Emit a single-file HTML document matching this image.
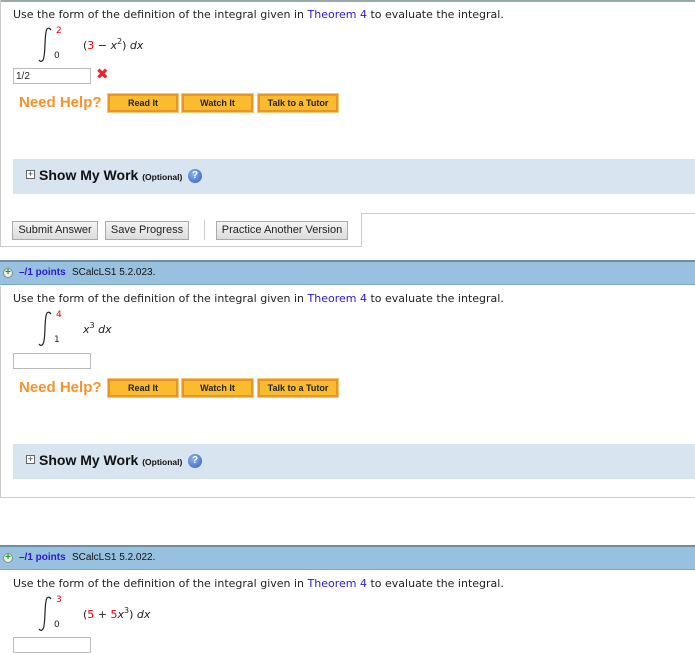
<!DOCTYPE html>
<html><head><meta charset="utf-8"><style>
*{margin:0;padding:0;box-sizing:border-box}
body{width:695px;height:640px;overflow:hidden;background:#fff;position:relative;font-family:"DejaVu Sans",Verdana,sans-serif;font-size:11px;color:#222}
.a{position:absolute;white-space:nowrap}
.q{font-size:11px}
.q span{color:#2a1ad0}
.r{color:#e00}
.inp{position:absolute;width:78px;height:16px;border:1px solid #bbb;background:#fff;font-family:"Liberation Sans",sans-serif;font-size:10px;padding:1px 2px;line-height:13px}
.nh{position:absolute;color:#f7922c;font-family:"Liberation Sans",sans-serif;font-weight:bold;font-size:15px}
.ob{position:absolute;height:18px;background:#fbbb2e;border:2px solid #e8942a;outline:1px solid #f3c873;font-family:"Liberation Sans",sans-serif;font-weight:bold;font-size:9px;text-align:center;line-height:14px;color:#222}
.smw{position:absolute;left:13px;width:682px;height:35px;background:#d8e4ef}
.smw .pl{position:absolute;left:13px;top:11px;width:9px;height:9px;border:1px solid #666;background:#fff;font-size:9px;line-height:7px;text-align:center;font-family:"Liberation Sans";color:#333}
.smw .t{position:absolute;left:26px;top:8px;font-family:"Liberation Sans",sans-serif;font-weight:bold;font-size:14px;color:#111}
.smw .t small{font-size:8.5px}
.smw .h{position:absolute;left:175px;top:10px;width:14px;height:14px;border-radius:50%;background:radial-gradient(circle at 40% 35%,#8fb4ec,#2a5fb8);color:#fff;font-size:10px;font-weight:bold;text-align:center;line-height:14px;font-family:"Liberation Sans"}
.gb{position:absolute;top:221px;height:19px;background:linear-gradient(#f4f4f4,#dcdcdc);border:1px solid #aaa;font-family:"Liberation Sans",sans-serif;font-size:11px;text-align:center;line-height:17px;color:#222}
.hb{position:absolute;left:0;width:695px;height:25px;background:#98c1e0;border-top:2px solid #6d8ea5;border-bottom:1px solid #7ea6c3}
.hb .c{position:absolute;left:3px;top:6px;width:10px;height:10px;border-radius:50%;background:#e8f2e0;border:1px solid #889;color:#1a9a1a;font-size:10px;font-weight:bold;line-height:8px;text-align:center;font-family:"Liberation Sans"}
.hb .p{position:absolute;left:19px;top:5px;color:#2a1ad0;font-family:"Liberation Sans";font-weight:bold;font-size:10px}
.hb .s{position:absolute;left:72px;top:5px;color:#111;font-family:"Liberation Sans";font-size:10px}
.ex{font-size:11px}
.ex i{font-style:italic}
sup{font-size:8px;vertical-align:5px;line-height:0}
.lim{position:absolute;font-size:9px}
</style></head><body>
<!-- box 1 borders -->
<div class="a" style="left:0;top:0;width:695px;height:2px;background:#9aa"></div>
<div class="a" style="left:0;top:0;width:1px;height:247px;background:#ccc"></div>
<div class="a" style="left:0;top:246px;width:362px;height:1px;background:#ccc"></div>
<div class="a" style="left:361px;top:213px;width:1px;height:34px;background:#ccc"></div>
<div class="a" style="left:361px;top:213px;width:334px;height:1px;background:#ccc"></div>

<div class="a q" style="left:13px;top:8px">Use the form of the definition of the integral given in <span>Theorem 4</span> to evaluate the integral.</div>
<svg class="a" style="left:36px;top:27px" width="18" height="36"><path d="M15 3 Q13 0 11 2 Q9.5 4 9 17 Q8.5 31 7 33 Q5 36 3 33" fill="none" stroke="#222" stroke-width="1.2"/></svg>
<div class="lim r" style="left:56px;top:26px">2</div><div class="lim" style="left:54px;top:51px">0</div>
<div class="a ex" style="left:83px;top:39px">(<span class="r">3</span> − <i>x</i><sup>2</sup>) <i>dx</i></div>
<div class="inp" style="left:13px;top:68px">1/2</div>
<div class="a" style="left:96px;top:65px;color:#e23;font-size:15px;font-weight:bold;font-family:'DejaVu Sans'">✖</div>
<div class="nh" style="left:19px;top:94px">Need Help?</div>
<div class="ob" style="left:108px;top:94px;width:70px">Read It</div>
<div class="ob" style="left:182px;top:94px;width:71px">Watch It</div>
<div class="ob" style="left:258px;top:94px;width:80px">Talk to a Tutor</div>
<div class="smw" style="top:159px"><div class="pl">+</div><div class="t">Show My Work <small>(Optional)</small></div><div class="h">?</div></div>
<div class="gb" style="left:12px;width:86px">Submit Answer</div>
<div class="gb" style="left:105px;width:84px">Save Progress</div>
<div class="a" style="left:204px;top:220px;width:1px;height:20px;background:#ccc"></div>
<div class="gb" style="left:216px;width:132px">Practice Another Version</div>

<div class="hb" style="top:260px"><div class="c">+</div><div class="p">–/1 points</div><div class="s">SCalcLS1 5.2.023.</div></div>
<div class="a" style="left:0;top:286px;width:1px;height:212px;background:#ccc"></div>
<div class="a" style="left:0;top:497px;width:695px;height:1px;background:#ccc"></div>
<div class="a q" style="left:13px;top:292px">Use the form of the definition of the integral given in <span>Theorem 4</span> to evaluate the integral.</div>
<svg class="a" style="left:36px;top:311px" width="18" height="36"><path d="M15 3 Q13 0 11 2 Q9.5 4 9 17 Q8.5 31 7 33 Q5 36 3 33" fill="none" stroke="#222" stroke-width="1.2"/></svg>
<div class="lim r" style="left:56px;top:310px">4</div><div class="lim" style="left:54px;top:335px">1</div>
<div class="a ex" style="left:83px;top:323px"><i>x</i><sup>3</sup> <i>dx</i></div>
<div class="inp" style="left:13px;top:353px"></div>
<div class="nh" style="left:19px;top:379px">Need Help?</div>
<div class="ob" style="left:108px;top:379px;width:70px">Read It</div>
<div class="ob" style="left:182px;top:379px;width:71px">Watch It</div>
<div class="ob" style="left:258px;top:379px;width:80px">Talk to a Tutor</div>
<div class="smw" style="top:444px"><div class="pl">+</div><div class="t">Show My Work <small>(Optional)</small></div><div class="h">?</div></div>

<div class="hb" style="top:545px"><div class="c">+</div><div class="p">–/1 points</div><div class="s">SCalcLS1 5.2.022.</div></div>
<div class="a q" style="left:13px;top:577px">Use the form of the definition of the integral given in <span>Theorem 4</span> to evaluate the integral.</div>
<svg class="a" style="left:36px;top:596px" width="18" height="36"><path d="M15 3 Q13 0 11 2 Q9.5 4 9 17 Q8.5 31 7 33 Q5 36 3 33" fill="none" stroke="#222" stroke-width="1.2"/></svg>
<div class="lim r" style="left:56px;top:595px">3</div><div class="lim" style="left:54px;top:620px">0</div>
<div class="a ex" style="left:83px;top:608px">(<span class="r">5</span> + <span class="r">5</span><i>x</i><sup>3</sup>) <i>dx</i></div>
<div class="inp" style="left:13px;top:637px"></div>
</body></html>
